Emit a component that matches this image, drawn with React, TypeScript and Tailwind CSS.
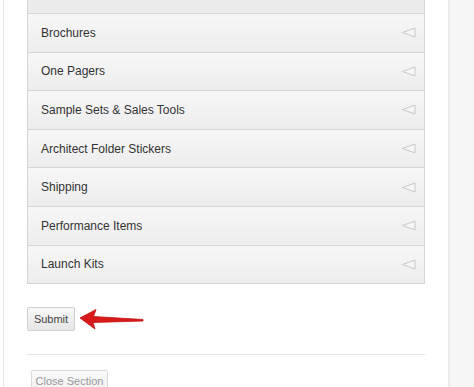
import React from "react";

const items = [
  "Brochures",
  "One Pagers",
  "Sample Sets & Sales Tools",
  "Architect Folder Stickers",
  "Shipping",
  "Performance Items",
  "Launch Kits",
];

const Caret = () => (
  <svg width="15" height="11" viewBox="0 0 15 11" className="shrink-0">
    <path d="M14 1 L1.5 5.5 L14 10 Z" fill="#f6f6f6" stroke="#c8c8c8" strokeWidth="1" strokeLinejoin="round" />
  </svg>
);

const Row = ({ label }: { label: string }) => (
  <div className="flex h-[38.6px] shrink-0 items-center justify-between border-x border-b border-[#d6d6d6] bg-gradient-to-b from-[#f7f7f7] to-[#ededed] pl-[13px] pr-[8px]">
    <span className="text-[12px] text-[#333]">{label}</span>
    <Caret />
  </div>
);

const Arrow = () => (
  <svg width="66" height="22" viewBox="0 0 66 22" className="ml-[4px] shrink-0">
    <path d="M1 10 L17 1.5 L14.5 8.5 L64 11.5 L64 13 L14 14.5 L16 21 Z" fill="#d91a1a" stroke="#c01010" strokeWidth="0.8" strokeLinejoin="round" />
  </svg>
);

export default function App() {
  return (
    <div className="flex h-[387px] w-[474px] overflow-hidden bg-white font-['Liberation_Sans',Arial,sans-serif]">
      <div className="ml-[3px] w-px shrink-0 bg-[#e6e6e6]" />
      <div className="ml-[23px] flex w-[398px] shrink-0 flex-col">
        <div className="h-[14px] shrink-0 border-x border-b border-[#d6d6d6] bg-[#ececec]" />
        {items.map((item) => (
          <Row key={item} label={item} />
        ))}
        <div className="mt-[23px] flex shrink-0 items-center">
          <button className="h-[24px] w-[48px] rounded-[2px] border border-[#cfcfcf] bg-gradient-to-b from-[#f8f8f8] to-[#e6e6e6] text-[11px] text-[#444]">
            Submit
          </button>
          <Arrow />
        </div>
        <div className="mt-[23px] h-px shrink-0 bg-[#e4e4e4]" />
        <div className="mt-[13px] shrink-0 pl-[4px]">
          <button className="h-[24px] w-[77px] rounded-[2px] border border-[#dadada] bg-gradient-to-b from-[#fafafa] to-[#efefef] pb-[2px] text-[11px] text-[#999]">
            Close Section
          </button>
        </div>
      </div>
      <div className="ml-[23px] flex-1 border-l-2 border-[#ececec] bg-[#f7f7f7]" />
    </div>
  );
}
